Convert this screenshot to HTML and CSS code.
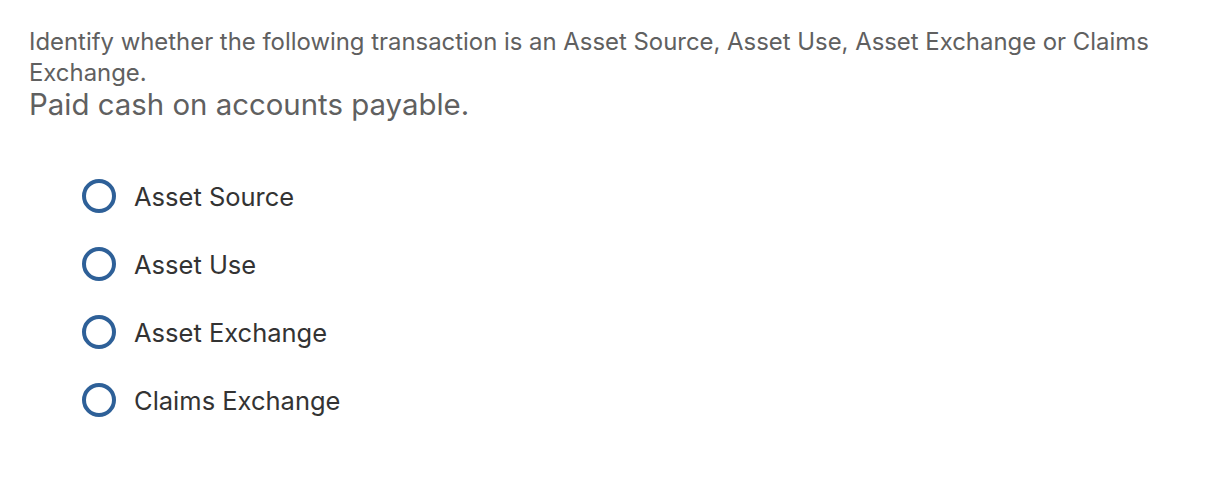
FILE: index.html
```html
<!DOCTYPE html>
<html>
<head>
<meta charset="utf-8">
<link rel="stylesheet" href="styles.css">
</head>
<body>
<div class="question">
  <p class="prompt">Identify whether the following transaction is an Asset Source, Asset Use, Asset Exchange or Claims Exchange.</p>
  <p class="stem">Paid cash on accounts payable.</p>
  <ul class="choices">
    <li class="choice"><span class="radio"></span><span class="label">Asset Source</span></li>
    <li class="choice"><span class="radio"></span><span class="label">Asset Use</span></li>
    <li class="choice"><span class="radio"></span><span class="label">Asset Exchange</span></li>
    <li class="choice"><span class="radio"></span><span class="label">Claims Exchange</span></li>
  </ul>
</div>
</body>
</html>
```
FILE: styles.css
```css
html, body {
  margin: 0;
  padding: 0;
  background: #ffffff;
}
body {
  font-family: "Inter", "Liberation Sans", sans-serif;
}
.question {
  padding: 26px 30px 0 29px;
}
.prompt {
  margin: 0;
  font-size: 23.9px;
  line-height: 31px;
  color: #606060;
  max-width: 1140px;
}
.stem {
  margin: 0;
  font-size: 29.4px;
  line-height: 34px;
  color: #606060;
}
.choices {
  list-style: none;
  margin: 0;
  padding: 57px 0 0 53px;
  display: flex;
  flex-direction: column;
  gap: 34px;
}
.choice {
  display: flex;
  align-items: center;
  gap: 18px;
  height: 34px;
}
.radio {
  box-sizing: border-box;
  width: 34px;
  height: 34px;
  border: 4px solid #2e6098;
  border-radius: 50%;
  flex: none;
}
.label {
  font-size: 25.5px;
  color: #333333;
}
```
